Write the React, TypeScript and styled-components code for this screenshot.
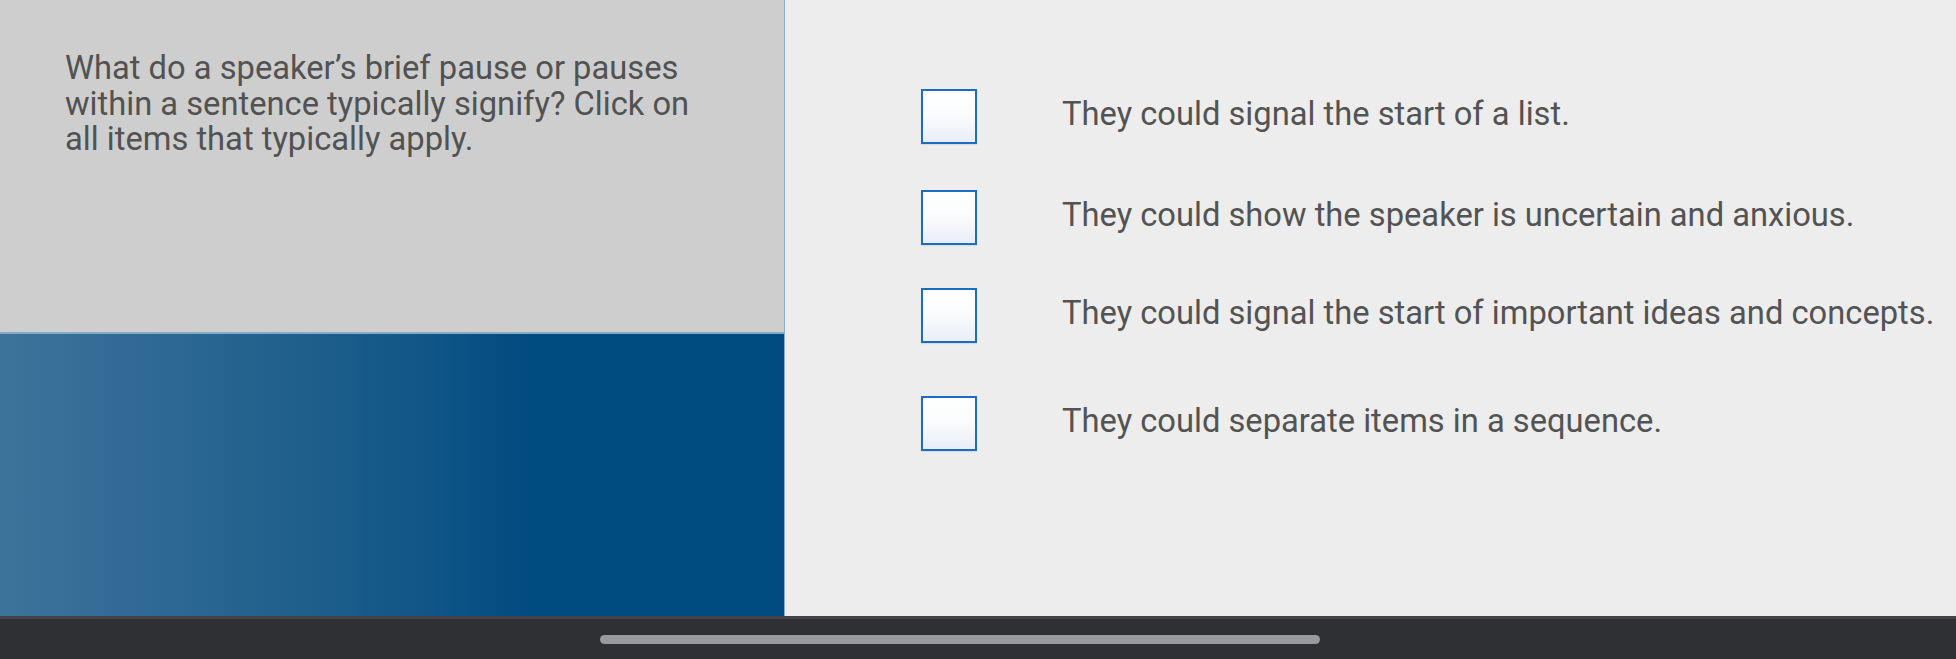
import styled, { createGlobalStyle } from 'styled-components';

const GlobalStyle = createGlobalStyle`
	html,
	body {
		margin: 0;
		padding: 0;
		background: #2f3034;
	}

	body {
		font-family: Roboto, 'Liberation Sans', sans-serif;
	}
`;

const Screen = styled.div`
	display: flex;
	flex-direction: column;
	width: 1956px;
	height: 659px;
	overflow: hidden;
`;

const Stage = styled.main`
	flex: 1;
	display: flex;
	min-height: 0;
`;

const Sidebar = styled.aside`
	display: flex;
	flex-direction: column;
	width: 784px;
	flex-shrink: 0;
	border-right: 1px solid #8eaac2;
	box-shadow: 1px 0 0 #dfe5ec;
`;

const QuestionBox = styled.section`
	height: 332px;
	box-sizing: border-box;
	padding: 51px 40px 0 65px;
	background: #cecece;
`;

const QuestionText = styled.p`
	margin: 0;
	max-width: 640px;
	font-size: 32.7px;
	line-height: 35.5px;
	color: #525252;
`;

const Banner = styled.div`
	flex: 1;
	border-top: 2px solid #86a9c4;
	background: linear-gradient(
		to right,
		#3d739b 0%,
		#2c6892 22%,
		#1c5d8b 42%,
		#0c5385 58%,
		#004b80 68%,
		#004b80 100%
	);
`;

const Answers = styled.ul`
	flex: 1;
	list-style: none;
	margin: 0;
	padding: 0 0 0 136px;
	background: #ededed;
`;

const AnswerRow = styled.li<{ $top: number }>`
	display: flex;
	align-items: center;
	height: 55px;
	margin-top: ${({ $top }) => $top}px;
	cursor: pointer;
`;

const Checkbox = styled.span`
	width: 56px;
	height: 55px;
	box-sizing: border-box;
	flex-shrink: 0;
	border: 2.5px solid #1c6cc3;
	background: linear-gradient(to bottom, #ffffff 0%, #fbfcfd 45%, #e9edf5 100%);
	box-shadow: 0 1px 1px rgba(0, 0, 0, 0.08);
`;

const AnswerLabel = styled.span`
	margin: -6px 0 0 85px;
	font-size: 32.7px;
	color: #535353;
	white-space: nowrap;
`;

const BottomBar = styled.footer`
	height: 43px;
	box-sizing: border-box;
	display: flex;
	align-items: center;
	border-top: 3px solid #46414b;
	background: #2f3034;
`;

const ScrollPill = styled.div`
	width: 720px;
	height: 9px;
	margin-left: 600px;
	border-radius: 5px;
	background: #9a9a9c;
`;

const answers = [
	{ top: 89, label: 'They could signal the start of a list.' },
	{ top: 46, label: 'They could show the speaker is uncertain and anxious.' },
	{ top: 43, label: 'They could signal the start of important ideas and concepts.' },
	{ top: 53, label: 'They could separate items in a sequence.' },
];

const App = () => {
	return (
		<>
			<GlobalStyle />
			<Screen>
				<Stage>
					<Sidebar>
						<QuestionBox>
							<QuestionText>
								What do a speaker’s brief pause or pauses within a sentence typically
								signify? Click on all items that typically apply.
							</QuestionText>
						</QuestionBox>
						<Banner />
					</Sidebar>
					<Answers>
						{answers.map((a) => (
							<AnswerRow key={a.label} $top={a.top}>
								<Checkbox role="checkbox" aria-checked="false" />
								<AnswerLabel>{a.label}</AnswerLabel>
							</AnswerRow>
						))}
					</Answers>
				</Stage>
				<BottomBar>
					<ScrollPill />
				</BottomBar>
			</Screen>
		</>
	);
};

export default App;
